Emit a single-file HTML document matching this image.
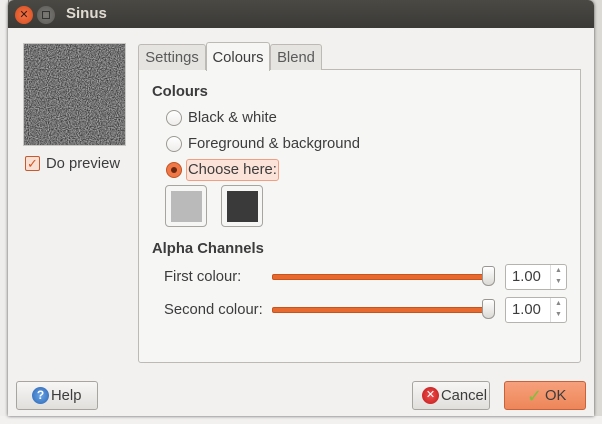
<!DOCTYPE html><html><head><style>
body{margin:0;width:602px;height:424px;overflow:hidden;background:#dcdad5;font-family:"Liberation Sans","DejaVu Sans",sans-serif;font-size:14.8px;line-height:20px;color:#3c3c3c;position:relative}
.a{position:absolute}
.win{left:8px;top:0;width:586px;height:416px;background:#f2f1f0;border-radius:6px 6px 0 0;box-shadow:0 0 3px #555}
.title{left:8px;top:0;width:586px;height:28px;background:linear-gradient(#4a4944,#3b3a36);border-radius:6px 6px 0 0}
.btnc{width:18px;height:18px;border-radius:50%}
.tab{top:44px;height:25px;border:1px solid #bdbab5;border-bottom:none;border-radius:3px 3px 0 0;background:#e6e4e1;color:#5a5a5a;text-align:center;line-height:27px}
.radio{width:14px;height:14px;border:1px solid #9d9a95;border-radius:50%;background:linear-gradient(#fff,#eeedeb)}
.btn{height:27px;border:1px solid #a8a5a0;border-radius:3px;background:linear-gradient(#f7f6f5,#e1dfdc);line-height:29px}
.spin{width:60px;height:24px;border:1px solid #b6b3ae;border-radius:3px;background:#fff}
.track{height:4px;background:#e8692d;border-radius:2px;border:1px solid #c9531d}
.knob{width:11px;height:18px;background:linear-gradient(#fff,#dcdad6);border:1px solid #9a9792;border-radius:3px 3px 6px 6px}
</style></head><body>
<div class="a" style="left:0;top:0;width:8px;height:424px;background:#eeedeb;border-right:1px solid #888"></div>
<div class="a" style="left:0;top:416px;width:602px;height:8px;background:#f2f1f0"></div>
<div class="a win"></div>
<div class="a title"></div>
<div class="a btnc" style="left:15px;top:6px;background:radial-gradient(#f2764a,#d84a1b);color:#3a1a0e;font-size:11px;text-align:center;line-height:18px">✕</div>
<div class="a btnc" style="left:37px;top:6px;background:radial-gradient(#7b7a75,#5c5b57);"><div class="a" style="left:5px;top:5px;width:6px;height:6px;border:1px solid #333"></div></div>
<div class="a" style="left:66px;top:4px;color:#dfdbd2;font-weight:bold;font-size:15px">Sinus</div>
<div class="a" style="left:23px;top:43px;width:101px;height:101px;border:1px solid #c9c7c3;background:#777">
<svg width="101" height="101"><filter id="n"><feTurbulence type="fractalNoise" baseFrequency="0.9" numOctaves="1"/><feColorMatrix type="matrix" values="0 0 0 0 0  0 0 0 0 0  0 0 0 0 0  0 0 0 2 -0.6"/></filter><rect width="101" height="101" fill="#a8a8a8"/><rect width="101" height="101" fill="#333" filter="url(#n)" opacity=".8"/></svg></div>
<div class="a" style="left:25px;top:156px;width:13px;height:13px;border:1px solid #c65a2e;background:#f8e0d5;border-radius:2px;color:#d8551e;font-size:13px;line-height:13px;text-align:center;font-weight:bold">✓</div>
<div class="a" style="left:46px;top:154px">Do preview</div>
<div class="a" style="left:138px;top:69px;width:441px;height:292px;border:1px solid #bdbab5;background:#f6f6f5;border-radius:0 0 3px 3px"></div>
<div class="a tab" style="left:138px;width:66px">Settings</div>
<div class="a tab" style="left:206px;top:42px;height:28px;width:62px;background:#f6f6f5;color:#3c3c3c;line-height:30px">Colours</div>
<div class="a tab" style="left:270px;width:50px">Blend</div>
<div class="a" style="left:152px;top:82px;font-weight:bold">Colours</div>
<div class="a radio" style="left:166px;top:110px"></div><div class="a" style="left:188px;top:108px">Black &amp; white</div>
<div class="a radio" style="left:166px;top:136px"></div><div class="a" style="left:188px;top:134px">Foreground &amp; background</div>
<div class="a radio" style="left:166px;top:162px;border-color:#c35426;background:#f07746"><div class="a" style="left:4px;top:4px;width:6px;height:6px;border-radius:50%;background:#6b2810"></div></div>
<div class="a" style="left:186px;top:159px;width:91px;height:20px;border:1px solid #f0a080;background:#fbe3d9;border-radius:3px"></div>
<div class="a" style="left:188px;top:160px">Choose here:</div>
<div class="a btn" style="left:165px;top:185px;width:40px;height:40px;border-radius:4px;background:#f6f6f5"><div class="a" style="left:5px;top:5px;width:31px;height:31px;background:#bababa"></div></div>
<div class="a btn" style="left:221px;top:185px;width:40px;height:40px;border-radius:4px;background:#f6f6f5"><div class="a" style="left:5px;top:5px;width:31px;height:31px;background:#3a3a3a"></div></div>
<div class="a" style="left:152px;top:239px;font-weight:bold">Alpha Channels</div>
<div class="a" style="left:164px;top:267px">First colour:</div>
<div class="a track" style="left:272px;top:274px;width:214px"></div>
<div class="a knob" style="left:482px;top:266px"></div>
<div class="a spin" style="left:505px;top:264px"><span class="a" style="left:6px;top:2px">1.00</span><span class="a" style="left:44px;top:0;height:24px;border-left:1px solid #ddd;width:15px;font-size:7px;color:#888;text-align:center;line-height:11px">▲<br>▼</span></div>
<div class="a" style="left:164px;top:300px">Second colour:</div>
<div class="a track" style="left:272px;top:307px;width:214px"></div>
<div class="a knob" style="left:482px;top:299px"></div>
<div class="a spin" style="left:505px;top:297px"><span class="a" style="left:6px;top:2px">1.00</span><span class="a" style="left:44px;top:0;height:24px;border-left:1px solid #ddd;width:15px;font-size:7px;color:#888;text-align:center;line-height:11px">▲<br>▼</span></div>
<div class="a btn" style="left:16px;top:381px;width:80px"><span class="a" style="left:15px;top:5px;width:17px;height:17px;border-radius:50%;background:radial-gradient(#6aa6e6,#2a64b4);color:#fff;font-size:12px;font-weight:bold;text-align:center;line-height:17px">?</span><span class="a" style="left:34px;top:0">Help</span></div>
<div class="a btn" style="left:412px;top:381px;width:76px"><span class="a" style="left:9px;top:5px;width:17px;height:17px;border-radius:50%;background:radial-gradient(#f05050,#c01818);color:#fff;font-size:11px;font-weight:bold;text-align:center;line-height:17px">✕</span><span class="a" style="left:28px;top:0">Cancel</span></div>
<div class="a btn" style="left:504px;top:381px;width:80px;border-color:#c8623a;background:linear-gradient(#f6a07c,#ee8659)"><span class="a" style="left:22px;top:0;color:#7dc03c;font-size:18px;font-weight:bold">✓</span><span class="a" style="left:40px;top:0">OK</span></div>
</body></html>
